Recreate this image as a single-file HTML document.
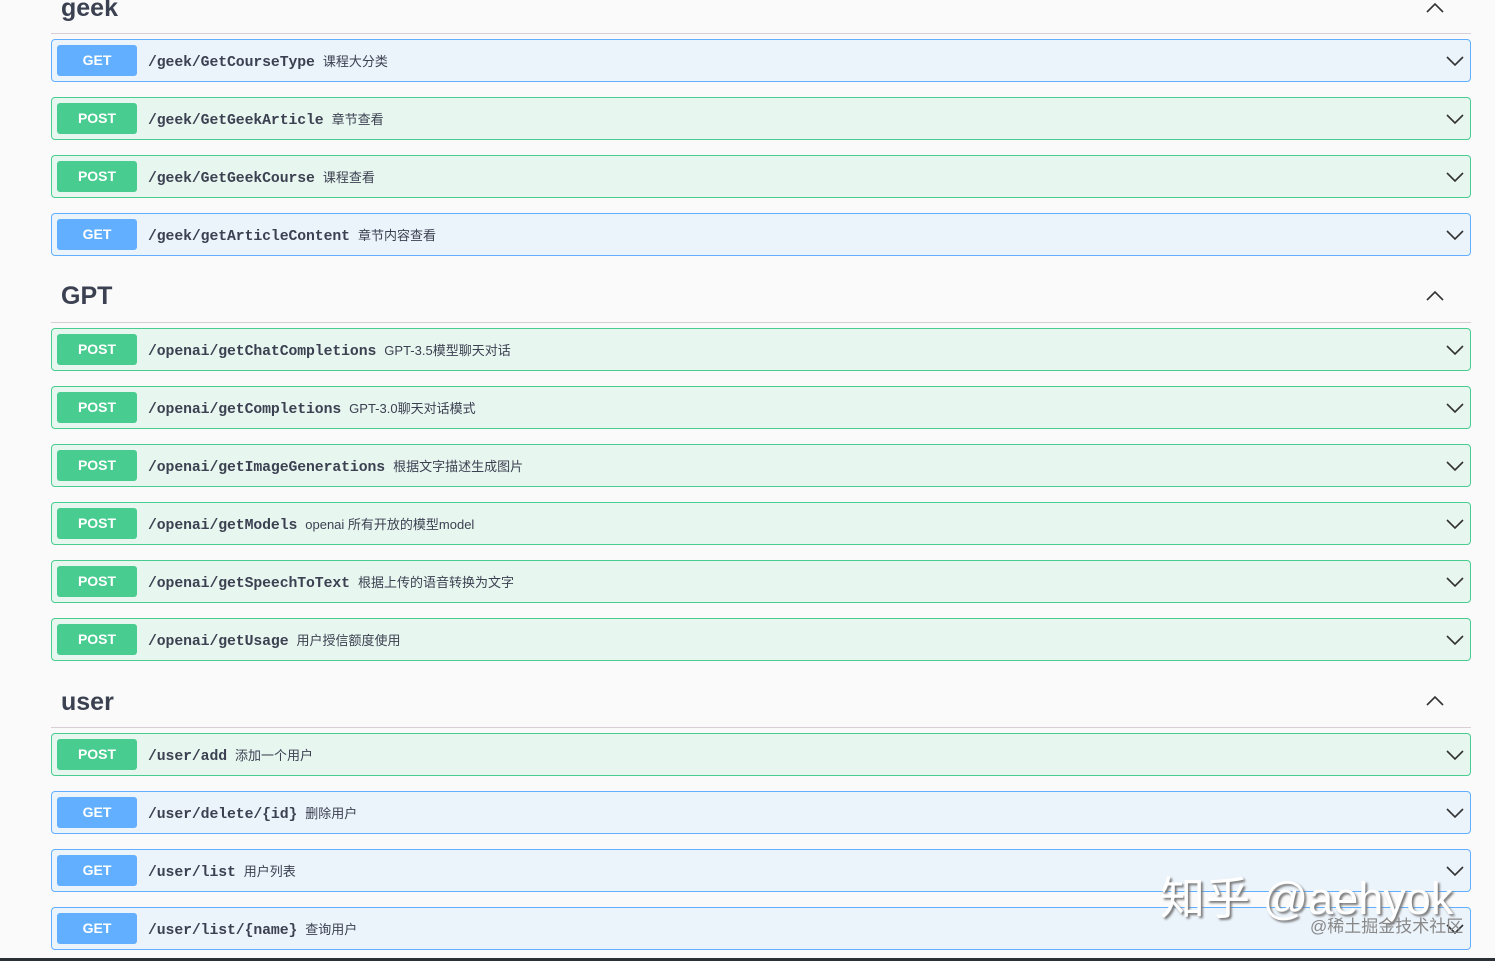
<!DOCTYPE html>
<html><head><meta charset="utf-8"><style>
body{margin:0;width:1495px;height:961px;background:#fafafa;position:relative;overflow:hidden;font-family:"Liberation Sans","Noto Sans CJK SC",sans-serif}
.h{position:absolute;left:61px;font-size:25px;font-weight:bold;color:#3b4151}
.ln{position:absolute;left:51px;width:1420px;height:1px;background:#d8cfd6}
.up{position:absolute;left:1426px;width:18px;height:10px}
.r{position:absolute;left:51px;width:1418px;height:41px;border:1px solid;border-radius:4px;box-sizing:content-box}
.g{background:#ebf3fb;border-color:#61affe}
.p{background:#e8f6f0;border-color:#49cc90}
.b{position:absolute;left:5px;top:5px;width:80px;height:31px;border-radius:3px;color:#fff;font-weight:bold;font-size:14px;text-align:center;line-height:31px}
.g .b{background:#61affe}.p .b{background:#49cc90}
.t{position:absolute;left:96px;top:0;line-height:43px;white-space:nowrap;color:#3b4151}
.t b{font-family:"Liberation Mono","Noto Sans CJK SC",monospace;font-size:14.8px;font-weight:bold;letter-spacing:-0.1px}
.t span{font-size:13px;margin-left:8px}
.d{position:absolute;right:6px;top:16px;width:18px;height:10px}
</style></head><body>
<div class="h" style="top:-6px">geek</div>
<svg class="up" style="top:3px" viewBox="0 0 18 10"><path d="M1 9L9 1L17 9" fill="none" stroke="#333" stroke-width="1.6"/></svg>
<div class="ln" style="top:33px"></div>

<div class="r g" style="top:39px"><div class="b">GET</div><div class="t"><b>/geek/GetCourseType</b><span>课程大分类</span></div><svg class="d" viewBox="0 0 18 10"><path d="M1 1L9 9L17 1" fill="none" stroke="#333" stroke-width="1.6"/></svg></div>
<div class="r p" style="top:97px"><div class="b">POST</div><div class="t"><b>/geek/GetGeekArticle</b><span>章节查看</span></div><svg class="d" viewBox="0 0 18 10"><path d="M1 1L9 9L17 1" fill="none" stroke="#333" stroke-width="1.6"/></svg></div>
<div class="r p" style="top:155px"><div class="b">POST</div><div class="t"><b>/geek/GetGeekCourse</b><span>课程查看</span></div><svg class="d" viewBox="0 0 18 10"><path d="M1 1L9 9L17 1" fill="none" stroke="#333" stroke-width="1.6"/></svg></div>
<div class="r g" style="top:213px"><div class="b">GET</div><div class="t"><b>/geek/getArticleContent</b><span>章节内容查看</span></div><svg class="d" viewBox="0 0 18 10"><path d="M1 1L9 9L17 1" fill="none" stroke="#333" stroke-width="1.6"/></svg></div>

<div class="h" style="top:282px">GPT</div>
<svg class="up" style="top:291px" viewBox="0 0 18 10"><path d="M1 9L9 1L17 9" fill="none" stroke="#333" stroke-width="1.6"/></svg>
<div class="ln" style="top:322px"></div>

<div class="r p" style="top:328px"><div class="b">POST</div><div class="t"><b>/openai/getChatCompletions</b><span>GPT-3.5模型聊天对话</span></div><svg class="d" viewBox="0 0 18 10"><path d="M1 1L9 9L17 1" fill="none" stroke="#333" stroke-width="1.6"/></svg></div>
<div class="r p" style="top:386px"><div class="b">POST</div><div class="t"><b>/openai/getCompletions</b><span>GPT-3.0聊天对话模式</span></div><svg class="d" viewBox="0 0 18 10"><path d="M1 1L9 9L17 1" fill="none" stroke="#333" stroke-width="1.6"/></svg></div>
<div class="r p" style="top:444px"><div class="b">POST</div><div class="t"><b>/openai/getImageGenerations</b><span>根据文字描述生成图片</span></div><svg class="d" viewBox="0 0 18 10"><path d="M1 1L9 9L17 1" fill="none" stroke="#333" stroke-width="1.6"/></svg></div>
<div class="r p" style="top:502px"><div class="b">POST</div><div class="t"><b>/openai/getModels</b><span>openai 所有开放的模型model</span></div><svg class="d" viewBox="0 0 18 10"><path d="M1 1L9 9L17 1" fill="none" stroke="#333" stroke-width="1.6"/></svg></div>
<div class="r p" style="top:560px"><div class="b">POST</div><div class="t"><b>/openai/getSpeechToText</b><span>根据上传的语音转换为文字</span></div><svg class="d" viewBox="0 0 18 10"><path d="M1 1L9 9L17 1" fill="none" stroke="#333" stroke-width="1.6"/></svg></div>
<div class="r p" style="top:618px"><div class="b">POST</div><div class="t"><b>/openai/getUsage</b><span>用户授信额度使用</span></div><svg class="d" viewBox="0 0 18 10"><path d="M1 1L9 9L17 1" fill="none" stroke="#333" stroke-width="1.6"/></svg></div>

<div class="h" style="top:688px">user</div>
<svg class="up" style="top:696px" viewBox="0 0 18 10"><path d="M1 9L9 1L17 9" fill="none" stroke="#333" stroke-width="1.6"/></svg>
<div class="ln" style="top:727px"></div>

<div class="r p" style="top:733px"><div class="b">POST</div><div class="t"><b>/user/add</b><span>添加一个用户</span></div><svg class="d" viewBox="0 0 18 10"><path d="M1 1L9 9L17 1" fill="none" stroke="#333" stroke-width="1.6"/></svg></div>
<div class="r g" style="top:791px"><div class="b">GET</div><div class="t"><b>/user/delete/{id}</b><span>删除用户</span></div><svg class="d" viewBox="0 0 18 10"><path d="M1 1L9 9L17 1" fill="none" stroke="#333" stroke-width="1.6"/></svg></div>
<div class="r g" style="top:849px"><div class="b">GET</div><div class="t"><b>/user/list</b><span>用户列表</span></div><svg class="d" viewBox="0 0 18 10"><path d="M1 1L9 9L17 1" fill="none" stroke="#333" stroke-width="1.6"/></svg></div>
<div class="r g" style="top:907px"><div class="b">GET</div><div class="t"><b>/user/list/{name}</b><span>查询用户</span></div><svg class="d" viewBox="0 0 18 10"><path d="M1 1L9 9L17 1" fill="none" stroke="#333" stroke-width="1.6"/></svg></div>

<div style="position:absolute;left:1160px;top:862px;font-size:45px;color:#fff;text-shadow:2px 2px 2px #777;white-space:nowrap">知乎 @aehyok</div>
<div style="position:absolute;left:1310px;top:912px;font-size:17px;color:#888;white-space:nowrap">@稀土掘金技术社区</div>
<div style="position:absolute;left:0;top:958px;width:1495px;height:3px;background:#2a3036"></div>
</body></html>
